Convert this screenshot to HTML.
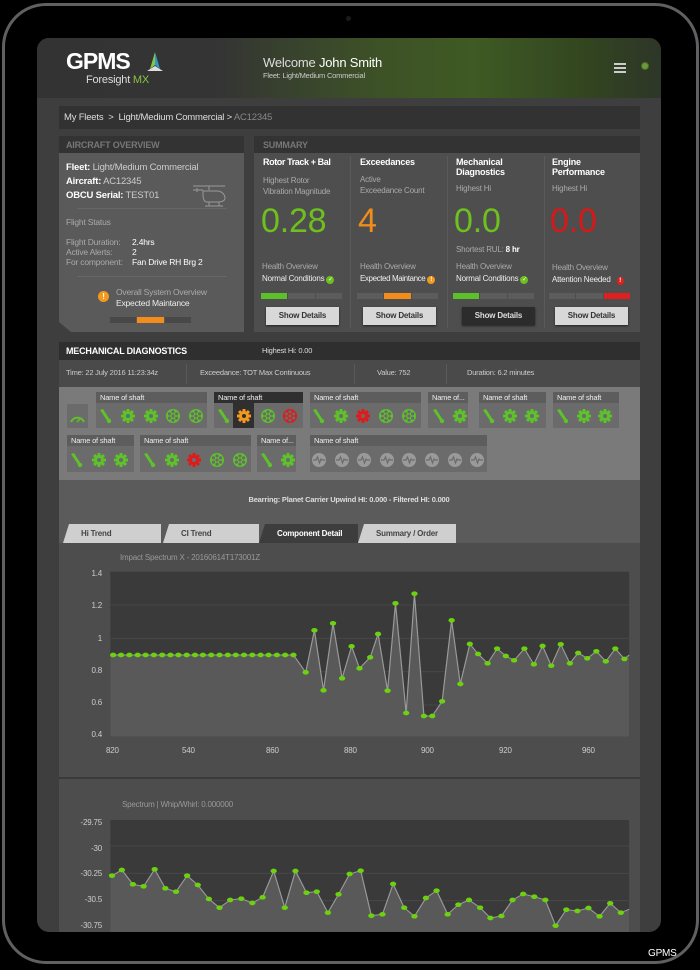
<!DOCTYPE html>
<html><head><meta charset="utf-8"><style>
*{margin:0;padding:0;box-sizing:border-box}
body{width:700px;height:970px;background:#000;position:relative;overflow:hidden;font-family:"Liberation Sans Narrow","Liberation Sans",sans-serif;color:#ddd;letter-spacing:-0.2px}
.a{position:absolute}
.frame{left:2px;top:3px;width:697px;height:961px;border:3px solid #5e6062;border-radius:44px}
.screen{left:37px;top:38px;width:624px;height:894px;border-radius:12px;background:#3e3e3e;overflow:hidden}
.t{position:absolute;white-space:nowrap}
.g{color:#aaa}
.btn{position:absolute;width:73px;height:18px;background:#d8d8d8;color:#333;font-weight:bold;font-size:8px;text-align:center;line-height:18px;box-shadow:0 1px 2px #222}
.bar{position:absolute;height:6px;width:81px;display:flex;gap:1px}
.bar i{flex:1;background:#5c5c5c}
.sep{position:absolute;width:1px;background:#5a5a5a}
.tab{position:absolute;top:486px;height:19px;background:#cfcfcf;color:#444;font-size:8px;font-weight:bold;line-height:19px;padding-left:18px;clip-path:polygon(6px 0,100% 0,100% 100%,0 100%)}
</style></head><body>
<div class="a frame"></div>
<div class="a" style="left:346px;top:16px;width:5px;height:5px;border-radius:50%;background:#1a1a1a"></div>
<div class="a screen">
 <div class="a" style="left:0;top:0;width:624px;height:60px;background:linear-gradient(90deg,#333 0%,#343434 28%,#3d5226 55%,#3f5a24 70%,#324520 88%,#2e3628 100%)"></div>
 <div class="t" style="left:29px;top:10px;font-size:23px;font-weight:bold;color:#fff;font-family:'Liberation Sans',sans-serif;letter-spacing:-1px">GPMS</div>
 <svg class="a" style="left:107px;top:13px" width="22" height="22" viewBox="0 0 22 22"><path d="M11 1 L6 18 L11 14Z" fill="#8ac43f"/><path d="M11 1 L16 18 L11 14Z" fill="#2f9ac9"/><path d="M3 20 L11 15 L19 20Z" fill="#ddd"/></svg>
 <div class="t" style="left:49px;top:36px;font-size:11px;color:#ddd">Foresight <span style="color:#8cc43f">MX</span></div>
 <div class="t" style="left:226px;top:17px;font-size:13px;color:#ddd">Welcome <span style="color:#fff">John Smith</span></div>
 <div class="t" style="left:226px;top:33px;font-size:7.5px;color:#ccc">Fleet: Light/Medium Commercial</div>
 <div class="a" style="left:577px;top:25px;width:12px;height:2px;background:#ccc;box-shadow:0 4px 0 #ccc,0 8px 0 #ccc"></div>
 <div class="a" style="left:604px;top:24px;width:8px;height:8px;border-radius:50%;background:#6a9a3a;border:1px solid #4b6b2b"></div>
 <div class="a" style="left:22px;top:68px;width:581px;height:23px;background:#323232"></div>
 <div class="t" style="left:27px;top:74px;font-size:9.5px;color:#ddd">My Fleets &nbsp;&gt;&nbsp; Light/Medium Commercial &gt; <span style="color:#888">AC12345</span></div>
 <div class="a" style="left:22px;top:98px;width:185px;height:196px;background:#5a5a5a;clip-path:polygon(0 0,100% 0,100% 100%,12px 100%,0 186px)"></div>
 <div class="a" style="left:22px;top:98px;width:185px;height:17px;background:#333"></div>
 <div class="t" style="left:29px;top:102px;font-size:9px;font-weight:bold;color:#777">AIRCRAFT OVERVIEW</div>
 <div class="t" style="left:29px;top:124px;font-size:9.5px;color:#ccc"><b style="color:#fff">Fleet:</b> Light/Medium Commercial</div>
 <div class="t" style="left:29px;top:138px;font-size:9.5px;color:#ccc"><b style="color:#fff">Aircraft:</b> AC12345</div>
 <div class="t" style="left:29px;top:152px;font-size:9.5px;color:#ccc"><b style="color:#fff">OBCU Serial:</b> TEST01</div>
 <svg class="a" style="left:154px;top:144px" width="40" height="26" viewBox="0 0 40 26" fill="none" stroke="#999" stroke-width="1"><path d="M2 4h32M18 4v4M2 8h10M6 6v4"/><path d="M12 9h14c5 0 8 4 8 7s-3 4-8 4H16c-3 0-4-4-4-8z"/><path d="M18 20v4M28 20v4M14 24h18"/></svg>
 <div class="a" style="left:40px;top:170px;width:150px;height:1px;background:#666"></div>
 <div class="t g" style="left:29px;top:179px;font-size:8.5px">Flight Status</div>
 <div class="t g" style="left:29px;top:199px;font-size:8.5px;line-height:10px">Flight Duration:<br>Active Alerts:<br>For component:</div>
 <div class="t" style="left:95px;top:199px;font-size:8.5px;line-height:10px;color:#fff">2.4hrs<br>2<br>Fan Drive RH Brg 2</div>
 <div class="a" style="left:40px;top:238px;width:150px;height:1px;background:#666"></div>
 <div class="a" style="left:61px;top:253px;width:11px;height:11px;border-radius:50%;background:#f39a1d;color:#fff;font-size:8px;font-weight:bold;text-align:center;line-height:11px">!</div>
 <div class="t g" style="left:79px;top:249px;font-size:8.5px">Overall System Overview</div>
 <div class="t" style="left:79px;top:260px;font-size:8.5px;color:#eee">Expected Maintance</div>
 <div class="bar" style="left:73px;top:279px;width:81px"><i style="background:#484848"></i><i style="background:#f28c1a"></i><i style="background:#484848"></i></div>
 <div class="a" style="left:217px;top:98px;width:386px;height:196px;background:#4e4e4e"></div>
 <div class="a" style="left:217px;top:98px;width:386px;height:17px;background:#333"></div>
 <div class="t" style="left:226px;top:102px;font-size:9px;font-weight:bold;color:#777">SUMMARY</div>
 <div class="sep" style="left:313px;top:118px;height:172px"></div>
 <div class="sep" style="left:410px;top:118px;height:172px"></div>
 <div class="sep" style="left:507px;top:118px;height:172px"></div>

 <div class="t" style="left:226px;top:119px;font-size:9px;font-weight:bold;color:#fff;letter-spacing:-0.4px">Rotor Track + Bal</div>
 <div class="t g" style="left:226px;top:137px;font-size:8px;line-height:11px">Highest Rotor<br>Vibration Magnitude</div>
 <div class="t" style="left:224px;top:164px;font-size:34px;color:#6ec01e">0.28</div>
 <div class="t g" style="left:225px;top:224px;font-size:8px">Health Overview</div>
 <div class="t" style="left:225px;top:236px;font-size:8px;color:#eee">Normal Conditions <span style="display:inline-block;width:8px;height:8px;border-radius:50%;background:#6ec01e;color:#fff;font-size:6px;text-align:center;line-height:8px">✓</span></div>
 <div class="bar" style="left:224px;top:255px"><i style="background:#5cc02a"></i><i></i><i></i></div>
 <div class="btn" style="left:229px;top:269px">Show Details</div>

 <div class="t" style="left:323px;top:119px;font-size:9px;font-weight:bold;color:#fff">Exceedances</div>
 <div class="t g" style="left:323px;top:136px;font-size:8px;line-height:11px">Active<br>Exceedance Count</div>
 <div class="t" style="left:321px;top:164px;font-size:34px;color:#f08c1a">4</div>
 <div class="t g" style="left:323px;top:224px;font-size:8px">Health Overview</div>
 <div class="t" style="left:323px;top:236px;font-size:8px;color:#eee;letter-spacing:-0.4px">Expected Maintance <span style="display:inline-block;width:8px;height:8px;border-radius:50%;background:#f39a1d;color:#fff;font-size:6px;font-weight:bold;text-align:center;line-height:8px">!</span></div>
 <div class="bar" style="left:320px;top:255px"><i></i><i style="background:#f28c1a"></i><i></i></div>
 <div class="btn" style="left:326px;top:269px">Show Details</div>

 <div class="t" style="left:419px;top:119px;font-size:9px;font-weight:bold;color:#fff;line-height:10px">Mechanical<br>Diagnostics</div>
 <div class="t g" style="left:419px;top:146px;font-size:8px">Highest Hi</div>
 <div class="t" style="left:417px;top:164px;font-size:34px;color:#6ec01e">0.0</div>
 <div class="t g" style="left:419px;top:207px;font-size:8px">Shortest RUL: <b style="color:#fff">8 hr</b></div>
 <div class="t g" style="left:419px;top:224px;font-size:8px">Health Overview</div>
 <div class="t" style="left:419px;top:236px;font-size:8px;color:#eee">Normal Conditions <span style="display:inline-block;width:8px;height:8px;border-radius:50%;background:#6ec01e;color:#fff;font-size:6px;text-align:center;line-height:8px">✓</span></div>
 <div class="bar" style="left:416px;top:255px"><i style="background:#5cc02a"></i><i></i><i></i></div>
 <div class="btn" style="left:425px;top:269px;background:#2c2c2c;color:#ddd">Show Details</div>

 <div class="t" style="left:515px;top:119px;font-size:9px;font-weight:bold;color:#fff;line-height:10px">Engine<br>Performance</div>
 <div class="t g" style="left:515px;top:146px;font-size:8px">Highest Hi</div>
 <div class="t" style="left:513px;top:164px;font-size:34px;color:#d81818">0.0</div>
 <div class="t g" style="left:515px;top:225px;font-size:8px">Health Overview</div>
 <div class="t" style="left:515px;top:237px;font-size:8px;color:#eee">Attention Needed &nbsp;&nbsp;<span style="display:inline-block;width:7px;height:8px;border-radius:50%;background:#e0201f;color:#fff;font-size:6px;font-weight:bold;text-align:center;line-height:8px">!</span></div>
 <div class="bar" style="left:512px;top:255px"><i></i><i></i><i style="background:#e0201f"></i></div>
 <div class="btn" style="left:518px;top:269px">Show Details</div>

 <div class="a" style="left:22px;top:304px;width:581px;height:18px;background:#2f2f2f"></div>
 <div class="t" style="left:29px;top:308px;font-size:9px;font-weight:bold;color:#fff">MECHANICAL DIAGNOSTICS</div>
 <div class="t" style="left:225px;top:308px;font-size:7.5px;color:#ddd">Highest Hi: 0.00</div>
 <div class="a" style="left:22px;top:322px;width:581px;height:27px;background:#4a4a4a"></div>
 <div class="t" style="left:29px;top:330px;font-size:7.5px;color:#ccc">Time: 22 July 2016 11:23:34z</div>
 <div class="sep" style="left:149px;top:326px;height:20px"></div>
 <div class="t" style="left:163px;top:330px;font-size:7.5px;color:#ccc">Exceedance: TOT Max Continuous</div>
 <div class="sep" style="left:317px;top:326px;height:20px"></div>
 <div class="t" style="left:340px;top:330px;font-size:7.5px;color:#ccc">Value: 752</div>
 <div class="sep" style="left:409px;top:326px;height:20px"></div>
 <div class="t" style="left:430px;top:330px;font-size:7.5px;color:#ccc">Duration: 6.2 minutes</div>
 <div class="a" style="left:22px;top:349px;width:581px;height:93px;background:#7a7a7a"></div>
 <svg class="a" style="left:0;top:0" width="624" height="894">
  <defs>
   <symbol id="w" viewBox="0 0 16 16"><path d="M3 2 L6 1 L13 12 L11 14 Z" fill="#5ec22a"/><circle cx="12" cy="13" r="2.2" fill="#5ec22a"/></symbol>
   <symbol id="gr" viewBox="0 0 16 16"><g fill="#5ec22a"><circle cx="8" cy="8" r="5"/><rect x="6.5" y="1" width="3" height="14"/><rect x="1" y="6.5" width="14" height="3"/><rect x="6.5" y="1" width="3" height="14" transform="rotate(45 8 8)"/><rect x="6.5" y="1" width="3" height="14" transform="rotate(-45 8 8)"/></g><circle cx="8" cy="8" r="2" fill="#6b6b6b"/></symbol>
   <symbol id="go" viewBox="0 0 16 16"><g fill="#f5981e"><circle cx="8" cy="8" r="5"/><rect x="6.5" y="1" width="3" height="14"/><rect x="1" y="6.5" width="14" height="3"/><rect x="6.5" y="1" width="3" height="14" transform="rotate(45 8 8)"/><rect x="6.5" y="1" width="3" height="14" transform="rotate(-45 8 8)"/></g><circle cx="8" cy="8" r="2" fill="#2f2f2f"/></symbol>
   <symbol id="gd" viewBox="0 0 16 16"><g fill="#e01a1a"><circle cx="8" cy="8" r="5"/><rect x="6.5" y="1" width="3" height="14"/><rect x="1" y="6.5" width="14" height="3"/><rect x="6.5" y="1" width="3" height="14" transform="rotate(45 8 8)"/><rect x="6.5" y="1" width="3" height="14" transform="rotate(-45 8 8)"/></g><circle cx="8" cy="8" r="2" fill="#6b6b6b"/></symbol>
   <symbol id="wh" viewBox="0 0 16 16"><circle cx="8" cy="8" r="7" fill="#5ec22a"/><g fill="#6b6b6b"><circle cx="8" cy="8" r="1.6"/><circle cx="8" cy="3.8" r="1.6"/><circle cx="8" cy="12.2" r="1.6"/><circle cx="4.4" cy="5.9" r="1.6"/><circle cx="11.6" cy="5.9" r="1.6"/><circle cx="4.4" cy="10.1" r="1.6"/><circle cx="11.6" cy="10.1" r="1.6"/></g></symbol>
   <symbol id="whr" viewBox="0 0 16 16"><circle cx="8" cy="8" r="7" fill="#e01a1a"/><g fill="#6b6b6b"><circle cx="8" cy="8" r="1.6"/><circle cx="8" cy="3.8" r="1.6"/><circle cx="8" cy="12.2" r="1.6"/><circle cx="4.4" cy="5.9" r="1.6"/><circle cx="11.6" cy="5.9" r="1.6"/><circle cx="4.4" cy="10.1" r="1.6"/><circle cx="11.6" cy="10.1" r="1.6"/></g></symbol>
   <symbol id="gy" viewBox="0 0 16 16"><circle cx="8" cy="8" r="7" fill="#9a9a9a"/><path d="M2 8h3l1.5-3 2 6 1.5-4 1 1h3" stroke="#6b6b6b" stroke-width="1.2" fill="none"/></symbol>
  </defs>
  <g font-size="7.5" fill="#eee" font-family="Liberation Sans Narrow, Liberation Sans, sans-serif">
   <path d="M30 366h21v24h-21z" fill="#6b6b6b"/>
   <path d="M34 384a7 7 0 0 1 13 0" stroke="#5ec22a" stroke-width="2" fill="none"/><path d="M40 384l4-4" stroke="#5ec22a" stroke-width="1.5"/>
   <rect x="59" y="354" width="111" height="36" fill="#6b6b6b"/><rect x="59" y="354" width="111" height="11" fill="#5d5d5d"/><text x="63" y="362">Name of shaft</text>
   <rect x="177" y="354" width="89" height="36" fill="#6b6b6b"/><rect x="177" y="354" width="89" height="11" fill="#2f2f2f"/><text x="181" y="362">Name of shaft</text>
   <rect x="196" y="365" width="21" height="25" fill="#2f2f2f"/>
   <rect x="273" y="354" width="111" height="36" fill="#6b6b6b"/><rect x="273" y="354" width="111" height="11" fill="#5d5d5d"/><text x="277" y="362">Name of shaft</text>
   <rect x="391" y="354" width="40" height="36" fill="#6b6b6b"/><rect x="391" y="354" width="40" height="11" fill="#5d5d5d"/><text x="395" y="362">Name of...</text>
   <rect x="442" y="354" width="67" height="36" fill="#6b6b6b"/><rect x="442" y="354" width="67" height="11" fill="#5d5d5d"/><text x="446" y="362">Name of shaft</text>
   <rect x="516" y="354" width="66" height="36" fill="#6b6b6b"/><rect x="516" y="354" width="66" height="11" fill="#5d5d5d"/><text x="520" y="362">Name of shaft</text>
   <rect x="30" y="397" width="67" height="37" fill="#6b6b6b"/><rect x="30" y="397" width="67" height="11" fill="#5d5d5d"/><text x="34" y="405">Name of shaft</text>
   <rect x="103" y="397" width="111" height="37" fill="#6b6b6b"/><rect x="103" y="397" width="111" height="11" fill="#5d5d5d"/><text x="107" y="405">Name of shaft</text>
   <rect x="220" y="397" width="39" height="37" fill="#6b6b6b"/><rect x="220" y="397" width="39" height="11" fill="#5d5d5d"/><text x="224" y="405">Name of...</text>
   <rect x="273" y="397" width="177" height="37" fill="#6b6b6b"/><rect x="273" y="397" width="177" height="11" fill="#5d5d5d"/><text x="277" y="405">Name of shaft</text>
  </g>
  <g>
   <use href="#w" x="60" y="370" width="16" height="16"/><use href="#gr" x="83" y="370" width="16" height="16"/><use href="#gr" x="106" y="370" width="16" height="16"/><use href="#wh" x="128" y="370" width="16" height="16"/><use href="#wh" x="151" y="370" width="16" height="16"/>
   <use href="#w" x="178" y="370" width="16" height="16"/><use href="#go" x="199" y="370" width="16" height="16"/><use href="#wh" x="223" y="370" width="16" height="16"/><use href="#whr" x="245" y="370" width="16" height="16"/>
   <use href="#w" x="273" y="370" width="16" height="16"/><use href="#gr" x="296" y="370" width="16" height="16"/><use href="#gd" x="318" y="370" width="16" height="16"/><use href="#wh" x="341" y="370" width="16" height="16"/><use href="#wh" x="364" y="370" width="16" height="16"/>
   <use href="#w" x="393" y="370" width="16" height="16"/><use href="#gr" x="415" y="370" width="16" height="16"/>
   <use href="#w" x="443" y="370" width="16" height="16"/><use href="#gr" x="465" y="370" width="16" height="16"/><use href="#gr" x="487" y="370" width="16" height="16"/>
   <use href="#w" x="517" y="370" width="16" height="16"/><use href="#gr" x="539" y="370" width="16" height="16"/><use href="#gr" x="560" y="370" width="16" height="16"/>
   <use href="#w" x="31" y="414" width="16" height="16"/><use href="#gr" x="54" y="414" width="16" height="16"/><use href="#gr" x="76" y="414" width="16" height="16"/>
   <use href="#w" x="104" y="414" width="16" height="16"/><use href="#gr" x="127" y="414" width="16" height="16"/><use href="#gd" x="149" y="414" width="16" height="16"/><use href="#wh" x="172" y="414" width="16" height="16"/><use href="#wh" x="195" y="414" width="16" height="16"/>
   <use href="#w" x="221" y="414" width="16" height="16"/><use href="#gr" x="243" y="414" width="16" height="16"/>
   <use href="#gy" x="274" y="414" width="16" height="16"/><use href="#gy" x="297" y="414" width="16" height="16"/><use href="#gy" x="319" y="414" width="16" height="16"/><use href="#gy" x="342" y="414" width="16" height="16"/><use href="#gy" x="364" y="414" width="16" height="16"/><use href="#gy" x="387" y="414" width="16" height="16"/><use href="#gy" x="410" y="414" width="16" height="16"/><use href="#gy" x="432" y="414" width="16" height="16"/>
  </g>
 </svg>
 <div class="a" style="left:22px;top:442px;width:581px;height:63px;background:#5b5b5b"></div>
 <div class="t" style="left:0;width:624px;text-align:center;top:457px;font-size:7.5px;font-weight:bold;color:#ddd">Bearring: Planet Carrier Upwind HI: 0.000 - Filtered HI: 0.000</div>
 <div class="tab" style="left:26px;width:98px">Hi Trend</div>
 <div class="tab" style="left:126px;width:96px">CI Trend</div>
 <div class="tab" style="left:222px;width:99px;background:#3d3d3d;color:#fff">Component Detail</div>
 <div class="tab" style="left:321px;width:98px">Summary / Order</div>
 <div class="a" style="left:22px;top:505px;width:581px;height:235px;background:#4d4d4d"></div>
 <div class="a" style="left:22px;top:741px;width:581px;height:160px;background:#4d4d4d"></div>
</div>
<svg class="a" style="left:40px;top:540px" width="620" height="230" viewBox="0 0 1568 690" preserveAspectRatio="none">
 <rect x="178" y="95" width="1312" height="495" fill="#3a3a3a"/>
 <g stroke="#474747" stroke-width="3"><path d="M178 195h1312M178 295h1312M178 395h1312M178 495h1312"/></g>
 <path d="M178 345 L641 345 L672 397 L694 271 L717 451 L741 250 L764 415 L788 319 L808 385 L835 352 L855 282 L879 452 L899 190 L926 519 L947 161 L971 528 L992 528 L1017 484 L1041 241 L1063 432 L1087 312 L1108 342 L1132 370 L1156 326 L1178 348 L1199 361 L1225 326 L1249 373 L1271 318 L1293 377 L1317 313 L1340 370 L1361 339 L1384 355 L1407 334 L1431 364 L1455 326 L1478 357 L1490 345 L1490 590 L178 590Z" fill="#595959"/>
 <path d="M178 345 L641 345 L672 397 L694 271 L717 451 L741 250 L764 415 L788 319 L808 385 L835 352 L855 282 L879 452 L899 190 L926 519 L947 161 L971 528 L992 528 L1017 484 L1041 241 L1063 432 L1087 312 L1108 342 L1132 370 L1156 326 L1178 348 L1199 361 L1225 326 L1249 373 L1271 318 L1293 377 L1317 313 L1340 370 L1361 339 L1384 355 L1407 334 L1431 364 L1455 326 L1478 357 L1490 345" fill="none" stroke="#9a9a9a" stroke-width="3"/>
 <g fill="#6cd10e">
  <ellipse cx="185" cy="345" rx="8" ry="7"/><ellipse cx="205" cy="345" rx="8" ry="7"/><ellipse cx="226" cy="345" rx="8" ry="7"/><ellipse cx="247" cy="345" rx="8" ry="7"/><ellipse cx="267" cy="345" rx="8" ry="7"/><ellipse cx="288" cy="345" rx="8" ry="7"/><ellipse cx="309" cy="345" rx="8" ry="7"/><ellipse cx="330" cy="345" rx="8" ry="7"/><ellipse cx="350" cy="345" rx="8" ry="7"/><ellipse cx="371" cy="345" rx="8" ry="7"/><ellipse cx="392" cy="345" rx="8" ry="7"/><ellipse cx="412" cy="345" rx="8" ry="7"/><ellipse cx="433" cy="345" rx="8" ry="7"/><ellipse cx="454" cy="345" rx="8" ry="7"/><ellipse cx="475" cy="345" rx="8" ry="7"/><ellipse cx="495" cy="345" rx="8" ry="7"/><ellipse cx="516" cy="345" rx="8" ry="7"/><ellipse cx="537" cy="345" rx="8" ry="7"/><ellipse cx="558" cy="345" rx="8" ry="7"/><ellipse cx="578" cy="345" rx="8" ry="7"/><ellipse cx="599" cy="345" rx="8" ry="7"/><ellipse cx="620" cy="345" rx="8" ry="7"/><ellipse cx="641" cy="345" rx="8" ry="7"/>
  <ellipse cx="672" cy="397" rx="8" ry="7"/><ellipse cx="694" cy="271" rx="8" ry="7"/><ellipse cx="717" cy="451" rx="8" ry="7"/><ellipse cx="741" cy="250" rx="8" ry="7"/><ellipse cx="764" cy="415" rx="8" ry="7"/><ellipse cx="788" cy="319" rx="8" ry="7"/><ellipse cx="808" cy="385" rx="8" ry="7"/><ellipse cx="835" cy="352" rx="8" ry="7"/><ellipse cx="855" cy="282" rx="8" ry="7"/><ellipse cx="879" cy="452" rx="8" ry="7"/><ellipse cx="899" cy="190" rx="8" ry="7"/><ellipse cx="926" cy="519" rx="8" ry="7"/><ellipse cx="947" cy="161" rx="8" ry="7"/><ellipse cx="971" cy="528" rx="8" ry="7"/><ellipse cx="992" cy="528" rx="8" ry="7"/><ellipse cx="1017" cy="484" rx="8" ry="7"/><ellipse cx="1041" cy="241" rx="8" ry="7"/><ellipse cx="1063" cy="432" rx="8" ry="7"/><ellipse cx="1087" cy="312" rx="8" ry="7"/><ellipse cx="1108" cy="342" rx="8" ry="7"/><ellipse cx="1132" cy="370" rx="8" ry="7"/><ellipse cx="1156" cy="326" rx="8" ry="7"/><ellipse cx="1178" cy="348" rx="8" ry="7"/><ellipse cx="1199" cy="361" rx="8" ry="7"/><ellipse cx="1225" cy="326" rx="8" ry="7"/><ellipse cx="1249" cy="373" rx="8" ry="7"/><ellipse cx="1271" cy="318" rx="8" ry="7"/><ellipse cx="1293" cy="377" rx="8" ry="7"/><ellipse cx="1317" cy="313" rx="8" ry="7"/><ellipse cx="1340" cy="370" rx="8" ry="7"/><ellipse cx="1361" cy="339" rx="8" ry="7"/><ellipse cx="1384" cy="355" rx="8" ry="7"/><ellipse cx="1407" cy="334" rx="8" ry="7"/><ellipse cx="1431" cy="364" rx="8" ry="7"/><ellipse cx="1455" cy="326" rx="8" ry="7"/><ellipse cx="1478" cy="357" rx="8" ry="7"/>
 </g>
</svg>
<div class="t" style="left:120px;top:553px;font-size:8px;color:#999">Impact Spectrum X - 20160614T173001Z</div>
<div class="t" style="left:80px;top:558px;width:22px;text-align:right;font-size:8px;color:#ccc;line-height:32.3px">1.4<br>1.2<br>1<br>0.8<br>0.6<br>0.4</div>
<div class="t" style="left:106px;top:746px;font-size:8px;color:#ccc">820</div>
<div class="t" style="left:182px;top:746px;font-size:8px;color:#ccc">540</div>
<div class="t" style="left:266px;top:746px;font-size:8px;color:#ccc">860</div>
<div class="t" style="left:344px;top:746px;font-size:8px;color:#ccc">880</div>
<div class="t" style="left:421px;top:746px;font-size:8px;color:#ccc">900</div>
<div class="t" style="left:499px;top:746px;font-size:8px;color:#ccc">920</div>
<div class="t" style="left:582px;top:746px;font-size:8px;color:#ccc">960</div>
<div class="a" style="left:59px;top:777px;width:581px;height:2px;background:#3a3a3a"></div>
<div style="position:absolute;left:37px;top:770px;width:624px;height:162px;overflow:hidden;border-radius:0 0 12px 12px">
<svg class="a" style="left:3px;top:0" width="620" height="200" viewBox="0 0 1568 600" preserveAspectRatio="none">
 <rect x="178" y="150" width="1312" height="450" fill="#3a3a3a"/>
 <g stroke="#474747" stroke-width="3"><path d="M178 228h1312M178 310h1312M178 392h1312M178 472h1312"/></g>
 <path d="M178 317 L182 317 L207 300 L235 343 L262 349 L290 298 L317 355 L344 365 L372 317 L399 345 L427 387 L454 413 L481 390 L509 386 L537 399 L563 382 L591 303 L619 413 L646 303 L674 368 L700 365 L728 428 L755 373 L783 312 L811 302 L838 437 L866 433 L893 342 L921 413 L947 439 L976 384 L1003 362 L1031 433 L1058 404 L1085 390 L1113 413 L1139 444 L1167 438 L1195 390 L1222 372 L1250 380 L1278 390 L1304 467 L1331 419 L1359 423 L1387 414 L1415 439 L1442 400 L1469 428 L1490 418 L1490 600 L178 600Z" fill="#595959"/>
 <path d="M182 317 L207 300 L235 343 L262 349 L290 298 L317 355 L344 365 L372 317 L399 345 L427 387 L454 413 L481 390 L509 386 L537 399 L563 382 L591 303 L619 413 L646 303 L674 368 L700 365 L728 428 L755 373 L783 312 L811 302 L838 437 L866 433 L893 342 L921 413 L947 439 L976 384 L1003 362 L1031 433 L1058 404 L1085 390 L1113 413 L1139 444 L1167 438 L1195 390 L1222 372 L1250 380 L1278 390 L1304 467 L1331 419 L1359 423 L1387 414 L1415 439 L1442 400 L1469 428 L1490 418" fill="none" stroke="#9a9a9a" stroke-width="3"/>
 <g fill="#6cd10e">
  <ellipse cx="182" cy="317" rx="8" ry="7"/><ellipse cx="207" cy="300" rx="8" ry="7"/><ellipse cx="235" cy="343" rx="8" ry="7"/><ellipse cx="262" cy="349" rx="8" ry="7"/><ellipse cx="290" cy="298" rx="8" ry="7"/><ellipse cx="317" cy="355" rx="8" ry="7"/><ellipse cx="344" cy="365" rx="8" ry="7"/><ellipse cx="372" cy="317" rx="8" ry="7"/><ellipse cx="399" cy="345" rx="8" ry="7"/><ellipse cx="427" cy="387" rx="8" ry="7"/><ellipse cx="454" cy="413" rx="8" ry="7"/><ellipse cx="481" cy="390" rx="8" ry="7"/><ellipse cx="509" cy="386" rx="8" ry="7"/><ellipse cx="537" cy="399" rx="8" ry="7"/><ellipse cx="563" cy="382" rx="8" ry="7"/><ellipse cx="591" cy="303" rx="8" ry="7"/><ellipse cx="619" cy="413" rx="8" ry="7"/><ellipse cx="646" cy="303" rx="8" ry="7"/><ellipse cx="674" cy="368" rx="8" ry="7"/><ellipse cx="700" cy="365" rx="8" ry="7"/><ellipse cx="728" cy="428" rx="8" ry="7"/><ellipse cx="755" cy="373" rx="8" ry="7"/><ellipse cx="783" cy="312" rx="8" ry="7"/><ellipse cx="811" cy="302" rx="8" ry="7"/><ellipse cx="838" cy="437" rx="8" ry="7"/><ellipse cx="866" cy="433" rx="8" ry="7"/><ellipse cx="893" cy="342" rx="8" ry="7"/><ellipse cx="921" cy="413" rx="8" ry="7"/><ellipse cx="947" cy="439" rx="8" ry="7"/><ellipse cx="976" cy="384" rx="8" ry="7"/><ellipse cx="1003" cy="362" rx="8" ry="7"/><ellipse cx="1031" cy="433" rx="8" ry="7"/><ellipse cx="1058" cy="404" rx="8" ry="7"/><ellipse cx="1085" cy="390" rx="8" ry="7"/><ellipse cx="1113" cy="413" rx="8" ry="7"/><ellipse cx="1139" cy="444" rx="8" ry="7"/><ellipse cx="1167" cy="438" rx="8" ry="7"/><ellipse cx="1195" cy="390" rx="8" ry="7"/><ellipse cx="1222" cy="372" rx="8" ry="7"/><ellipse cx="1250" cy="380" rx="8" ry="7"/><ellipse cx="1278" cy="390" rx="8" ry="7"/><ellipse cx="1304" cy="467" rx="8" ry="7"/><ellipse cx="1331" cy="419" rx="8" ry="7"/><ellipse cx="1359" cy="423" rx="8" ry="7"/><ellipse cx="1387" cy="414" rx="8" ry="7"/><ellipse cx="1415" cy="439" rx="8" ry="7"/><ellipse cx="1442" cy="400" rx="8" ry="7"/><ellipse cx="1469" cy="428" rx="8" ry="7"/>
 </g>
</svg>
</div>
<div class="t" style="left:122px;top:800px;font-size:8px;color:#999">Spectrum | Whip/Whirl: 0.000000</div>
<div class="t" style="left:72px;top:810px;width:30px;text-align:right;font-size:8px;color:#ccc;line-height:25.7px">-29.75<br>-30<br>-30.25<br>-30.5<br>-30.75</div>
<div class="t" style="left:648px;top:948px;font-size:10px;color:#fff;font-family:'Liberation Sans',sans-serif">GPMS</div>
</body></html>
